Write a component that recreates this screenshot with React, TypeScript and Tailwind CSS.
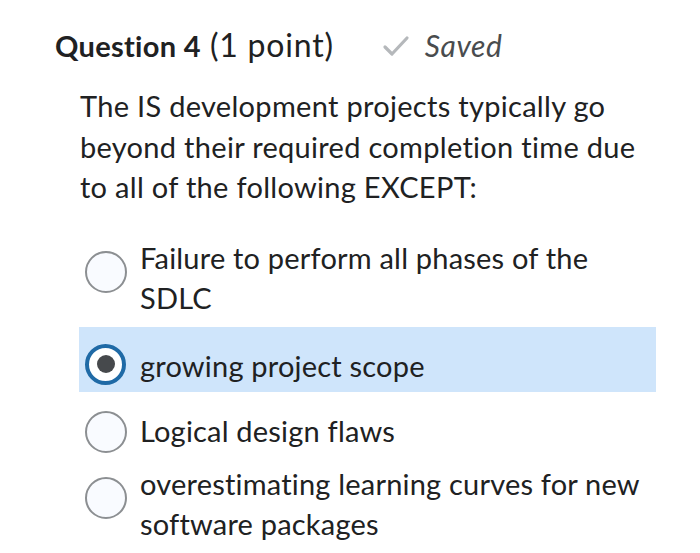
import React from "react";

function Radio({ checked }: { checked?: boolean }) {
  if (checked) {
    return (
      <span className="flex h-[41px] w-[41px] shrink-0 items-center justify-center rounded-full border-[4px] border-[#1f6aa6] bg-white">
        <span className="h-[18px] w-[18px] rounded-full bg-[#46494c]" />
      </span>
    );
  }
  return (
    <span className="block h-[42px] w-[42px] shrink-0 rounded-full border-2 border-[#8c8f92] bg-[#f9fbff]" />
  );
}

export default function App() {
  return (
    <div
      className="min-h-[553px] w-[700px] bg-white text-[#202122] [font-variant-ligatures:none]"
      style={{ fontFamily: "Lato, 'Noto Sans', sans-serif" }}
    >
      <div className="flex items-baseline pl-[55px] pt-[25px]">
        <span className="text-[29px] font-bold leading-[40px] tracking-[0.3px]">
          Question 4
        </span>
        <span className="ml-[9px] text-[32px] leading-[40px] tracking-[0.8px]">
          (1 point)
        </span>
        <svg
          className="ml-[48px] self-center"
          width="28"
          height="24"
          viewBox="0 0 28 24"
          fill="none"
        >
          <path
            d="M3 13 L10 20 L25 4"
            stroke="#b5b8bb"
            strokeWidth="3.2"
            strokeLinecap="round"
            strokeLinejoin="round"
          />
        </svg>
        <span className="ml-[15px] text-[30px] italic leading-[40px] tracking-[0.6px] text-[#494c4e]">
          Saved
        </span>
      </div>

      <p className="ml-[80px] mt-[20px] w-[565px] text-[29px] leading-[40.5px] tracking-[0.3px]">
        The IS development projects typically go beyond their required
        completion time due to all of the following EXCEPT:
      </p>

      <div className="ml-[79px] mt-[30px] w-[577px] text-[29px] leading-[40px] tracking-[0.2px]">
        <div className="flex items-start pb-[9px] pl-[6px]">
          <div className="mt-[13px] w-[42px] shrink-0">
            <Radio />
          </div>
          <div className="ml-[13px] w-[515px]">
            Failure to perform all phases of the SDLC
          </div>
        </div>
        <div className="flex items-start bg-[#cfe5fb] pb-[6px] pl-[6px] pt-[17px]">
          <div className="w-[42px] shrink-0">
            <Radio checked />
          </div>
          <div className="ml-[13px] w-[500px] pt-[2px]">growing project scope</div>
        </div>
        <div className="flex items-start pb-[11px] pl-[6px] pt-[19px]">
          <div className="w-[42px] shrink-0">
            <Radio />
          </div>
          <div className="ml-[13px] w-[515px]">Logical design flaws</div>
        </div>
        <div className="flex items-start pl-[6px]">
          <div className="mt-[13px] w-[42px] shrink-0">
            <Radio />
          </div>
          <div className="ml-[13px] w-[515px]">
            overestimating learning curves for new software packages
          </div>
        </div>
      </div>
    </div>
  );
}
